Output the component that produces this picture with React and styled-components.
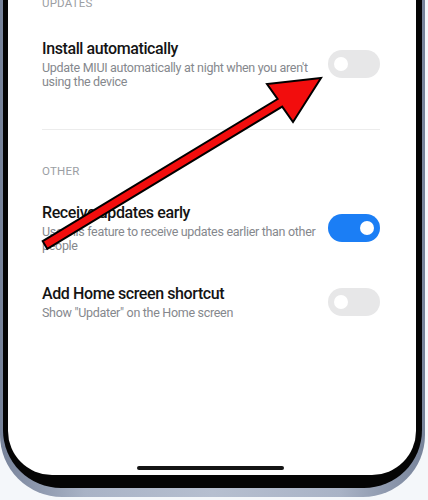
import React from "react";
import styled, { createGlobalStyle } from "styled-components";

const Global = createGlobalStyle`
  html, body { margin: 0; padding: 0; background: #f4f7fa; }
  body { width: 428px; height: 500px; overflow: hidden; font-family: Roboto, "Noto Sans", Arial, sans-serif; }
`;

const Stage = styled.div`
  position: relative;
  width: 428px;
  height: 500px;
`;

const Bezel = styled.div`
  width: 425px;
  height: 497px;
  box-sizing: border-box;
  padding: 0 3px 9px 3px;
  border-radius: 0 0 62px 62px;
  background: linear-gradient(90deg, #77839a 0%, #a9b3c6 20%, #b6bfd0 50%, #a9b3c6 80%, #77839a 100%);
`;

const Frame = styled.div`
  height: 100%;
  box-sizing: border-box;
  padding: 0 6px 13px 5px;
  border-radius: 0 0 58px 58px;
  background: #050505;
`;

const Screen = styled.div`
  height: 100%;
  box-sizing: border-box;
  background: #ffffff;
  border-radius: 0 0 44px 44px;
  padding: 0 36px 0 34px;
  display: flex;
  flex-direction: column;
  position: relative;
`;

const SectionLabel = styled.div`
  font-size: 11.5px;
  line-height: 14px;
  color: #9b9ea3;
  letter-spacing: 0.2px;
  margin-top: ${(p) => p.$top}px;
`;

const Row = styled.div`
  display: flex;
  align-items: center;
  justify-content: space-between;
  margin-top: ${(p) => p.$top}px;
`;

const Texts = styled.div`
  display: flex;
  flex-direction: column;
  gap: 2px;
  width: 280px;
`;

const Title = styled.div`
  font-size: 16px;
  line-height: 20px;
  font-weight: 500;
  color: #141414;
  letter-spacing: -0.4px;
`;

const Sub = styled.div`
  font-size: 12.5px;
  line-height: 14px;
  color: #85888d;
  letter-spacing: -0.3px;
`;

const Toggle = styled.div`
  width: 52px;
  height: 28px;
  border-radius: 14px;
  background: ${(p) => (p.$on ? "#1b7ef5" : "#e7e7e8")};
  display: flex;
  align-items: center;
  justify-content: ${(p) => (p.$on ? "flex-end" : "flex-start")};
  padding: 0 6px;
  box-sizing: border-box;
  flex-shrink: 0;
  margin-top: ${(p) => p.$shift || 0}px;
`;

const Knob = styled.div`
  width: 14px;
  height: 14px;
  border-radius: 50%;
  background: #ffffff;
`;

const Divider = styled.div`
  height: 1px;
  background: #ececec;
  margin-top: 40px;
`;

const HomeBar = styled.div`
  width: 147px;
  height: 4px;
  border-radius: 2px;
  background: #141414;
  align-self: center;
  margin-top: auto;
  margin-bottom: 5px;
  margin-left: -2px;
`;

const ArrowLayer = styled.svg`
  position: absolute;
  left: 0;
  top: 0;
  pointer-events: none;
`;

export default function App() {
  return (
    <Stage>
      <Global />
      <Bezel>
        <Frame>
          <Screen>
            <SectionLabel $top={-4}>UPDATES</SectionLabel>
            <Row $top={29}>
              <Texts>
                <Title>Install automatically</Title>
                <Sub>Update MIUI automatically at night when you aren't using the device</Sub>
              </Texts>
              <Toggle><Knob /></Toggle>
            </Row>
            <Divider />
            <SectionLabel $top={34}>OTHER</SectionLabel>
            <Row $top={25}>
              <Texts>
                <Title>Receive updates early</Title>
                <Sub>Use this feature to receive updates earlier than other people</Sub>
              </Texts>
              <Toggle $on $shift={-1}><Knob /></Toggle>
            </Row>
            <Row $top={31}>
              <Texts>
                <Title>Add Home screen shortcut</Title>
                <Sub>Show "Updater" on the Home screen</Sub>
              </Texts>
              <Toggle><Knob /></Toggle>
            </Row>
            <HomeBar />
          </Screen>
        </Frame>
      </Bezel>
      <ArrowLayer width="428" height="500" viewBox="0 0 428 500">
        <polygon
          points="42.7,241.2 277.6,99 267,84 321,78 293,122 282.2,106.7 47.3,248.9"
          fill="#f20d0d"
          stroke="#000"
          strokeWidth="2"
          strokeLinejoin="miter"
        />
      </ArrowLayer>
    </Stage>
  );
}
